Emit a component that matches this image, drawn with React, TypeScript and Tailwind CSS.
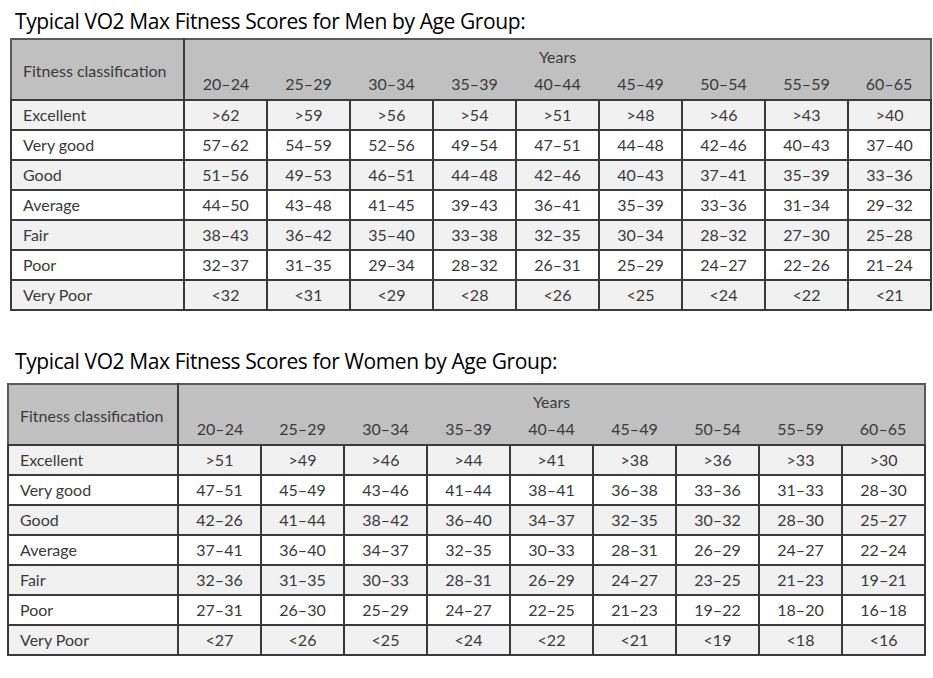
import React from 'react';

const ages = ['20–24', '25–29', '30–34', '35–39', '40–44', '45–49', '50–54', '55–59', '60–65'];

const labels = ['Excellent', 'Very good', 'Good', 'Average', 'Fair', 'Poor', 'Very Poor'];

const men: string[][] = [
    ['>62', '>59', '>56', '>54', '>51', '>48', '>46', '>43', '>40'],
    ['57–62', '54–59', '52–56', '49–54', '47–51', '44–48', '42–46', '40–43', '37–40'],
    ['51–56', '49–53', '46–51', '44–48', '42–46', '40–43', '37–41', '35–39', '33–36'],
    ['44–50', '43–48', '41–45', '39–43', '36–41', '35–39', '33–36', '31–34', '29–32'],
    ['38–43', '36–42', '35–40', '33–38', '32–35', '30–34', '28–32', '27–30', '25–28'],
    ['32–37', '31–35', '29–34', '28–32', '26–31', '25–29', '24–27', '22–26', '21–24'],
    ['<32', '<31', '<29', '<28', '<26', '<25', '<24', '<22', '<21'],
];

const women: string[][] = [
    ['>51', '>49', '>46', '>44', '>41', '>38', '>36', '>33', '>30'],
    ['47–51', '45–49', '43–46', '41–44', '38–41', '36–38', '33–36', '31–33', '28–30'],
    ['42–26', '41–44', '38–42', '36–40', '34–37', '32–35', '30–32', '28–30', '25–27'],
    ['37–41', '36–40', '34–37', '32–35', '30–33', '28–31', '26–29', '24–27', '22–24'],
    ['32–36', '31–35', '30–33', '28–31', '26–29', '24–27', '23–25', '21–23', '19–21'],
    ['27–31', '26–30', '25–29', '24–27', '22–25', '21–23', '19–22', '18–20', '16–18'],
    ['<27', '<26', '<25', '<24', '<22', '<21', '<19', '<18', '<16'],
];

function ScoreTable({ data, firstCol }: { data: string[][]; firstCol: number }) {
    return (
        <table className="border-collapse table-fixed border-2 border-[#5a5a5a] text-[#3a3a3a] text-[16px]" style={{ width: firstCol + 9 * 83 }}>
            <colgroup>
                <col style={{ width: firstCol }} />
                {ages.map((a) => (
                    <col key={a} className="w-[83px]" />
                ))}
            </colgroup>
            <thead>
                <tr className="bg-[#c0c0c0] h-[31px]">
                    <th rowSpan={2} className="border-r-2 border-[#3a3a3a] text-left font-normal pl-[11px] pt-[2px]">
                        Fitness classification
                    </th>
                    <th colSpan={9} className="font-normal align-bottom pb-[1px]">Years</th>
                </tr>
                <tr className="bg-[#c0c0c0] h-[30px]">
                    {ages.map((a) => (
                        <th key={a} className="font-normal align-middle pb-[2px]">{a}</th>
                    ))}
                </tr>
            </thead>
            <tbody>
                {data.map((row, i) => (
                    <tr key={labels[i]} className={`h-[30px] ${i % 2 === 0 ? 'bg-[#f1f1f1]' : 'bg-white'}`}>
                        <td className="border-2 border-[#3a3a3a] pl-[11px] leading-none">{labels[i]}</td>
                        {row.map((v, j) => (
                            <td key={j} className="border-2 border-[#3a3a3a] text-center leading-none">{v}</td>
                        ))}
                    </tr>
                ))}
            </tbody>
        </table>
    );
}

export default function App() {
    return (
        <div className="w-[933px] h-[678px] bg-white overflow-hidden">
            <h1 className="pl-[15px] pt-[7px] h-[38px] text-[21px] leading-[28px] text-black font-['Open_Sans',sans-serif] tracking-[-0.4px]">
                Typical VO2 Max Fitness Scores for Men by Age Group:
            </h1>
            <div className="pl-[10px] font-['Lato',sans-serif]">
                <ScoreTable data={men} firstCol={173} />
            </div>
            <h1 className="pl-[15px] pt-[36px] h-[72px] text-[21px] leading-[28px] text-black font-['Open_Sans',sans-serif] tracking-[-0.4px]">
                Typical VO2 Max Fitness Scores for Women by Age Group:
            </h1>
            <div className="pl-[7px] font-['Lato',sans-serif]">
                <ScoreTable data={women} firstCol={170} />
            </div>
        </div>
    );
}
